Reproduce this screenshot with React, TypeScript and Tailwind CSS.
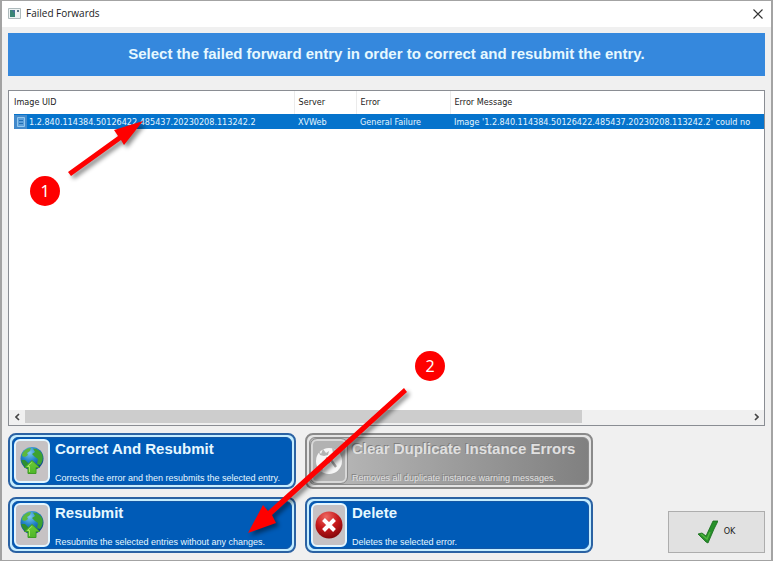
import React from "react";

const uid = "1.2.840.114384.50126422.485437.20230208.113242.2";

function GlobeIcon() {
  return (
    <svg viewBox="0 0 24 28" className="h-7 w-6" aria-hidden="true">
      <defs>
        <radialGradient id="sea" cx="0.4" cy="0.25" r="0.8">
          <stop offset="0" stopColor="#7cc8ee" />
          <stop offset="0.45" stopColor="#2383c8" />
          <stop offset="1" stopColor="#0b3c7c" />
        </radialGradient>
        <linearGradient id="leaf" x1="0" y1="0" x2="0" y2="1">
          <stop offset="0" stopColor="#6ccb35" />
          <stop offset="1" stopColor="#4fb62a" />
        </linearGradient>
      </defs>
      <circle cx="12" cy="11.5" r="11.5" fill="url(#sea)" />
      <path d="M2.5 6Q6 1 11 1L10 4L7 6L8 8L5 10L2 9Z" fill="#5cb83f" />
      <path d="M13 1.5Q20 2 22.5 8Q23.5 14 20 18L17 17L18 12L15 10L12 7L15 5Z" fill="#3da232" />
      <path d="M1.2 13L5 13L8 16L7 21Q2 18 1.2 13Z" fill="#2e8f30" />
      <path d="M12 13.5L19.5 20.5H16V26.5H8V20.5H4.5Z" fill="url(#leaf)" stroke="#3f9c26" strokeWidth="1" />
      <path d="M11.8 15.5L7.5 19.5H9.5V25" fill="none" stroke="#a4e668" strokeWidth="1" />
    </svg>
  );
}

function DisabledIcon() {
  return (
    <svg viewBox="0 0 28 28" className="h-7 w-7" aria-hidden="true">
      <circle cx="14" cy="14" r="13" fill="#f6f6f6" />
      <path d="M3 3L6 7L8 2L11 6L14 4L13 8L9 9L5 8ZM17 1L24 5L23 8L18 6Z" fill="#b4b4b4" />
      <path d="M11 11L16 13L21 20M19 9L15 13L13 16" stroke="#a2a2a2" strokeWidth="2.4" fill="none" />
      <path d="M4 20L8 22L7 25L4 22Z" fill="#c0c0c0" />
    </svg>
  );
}

function DeleteIcon() {
  return (
    <svg viewBox="0 0 28 28" className="h-7 w-7" aria-hidden="true">
      <defs>
        <radialGradient id="ruby" cx="0.4" cy="0.2" r="0.85">
          <stop offset="0" stopColor="#ee6a62" />
          <stop offset="0.5" stopColor="#c81a1c" />
          <stop offset="1" stopColor="#7c0508" />
        </radialGradient>
      </defs>
      <circle cx="14" cy="14" r="13.5" fill="url(#ruby)" />
      <path d="M8.5 8.5L19.5 19.5M19.5 8.5L8.5 19.5" stroke="#fff" strokeWidth="4" />
    </svg>
  );
}

function ActionButton({ title, detail, icon, disabled = false }: {
  title: string; detail: string; icon: React.ReactNode; disabled?: boolean;
}) {
  const outer = disabled ? "border-[#8a8a8a] bg-[#e4e4e4]" : "border-[#2b62a3] bg-[#c4edff]";
  const inner = disabled
    ? "border-[#8c8c8c] bg-linear-to-r from-[#bcbcbc] to-[#808080] text-[#e0e0e0] [text-shadow:-1px_-1px_0_#808080]"
    : "border-[#1557a5] bg-[#005bb7] text-[#e6f8ff]";
  const tile = disabled ? "border-[#d8d8d8] bg-[#b2b2b2] outline outline-[#8c8c8c]" : "border-[#e4f6ff] bg-[#c6c2c4]";
  return (
    <button type="button" disabled={disabled} className={`h-14 rounded-lg border-2 p-[2px] text-left ${outer}`}>
      <span className={`flex h-full items-center gap-[5px] rounded-md border pl-px ${inner}`}>
        <span className={`flex h-11 w-9 shrink-0 items-center justify-center rounded-md border-2 ${tile}`}>{icon}</span>
        <span className="flex h-full flex-col justify-between whitespace-nowrap">
          <span className="text-[15px] leading-[22px] font-bold">{title}</span>
          <span className="text-[9px] leading-3">{detail}</span>
        </span>
      </span>
    </button>
  );
}

function Badge({ n, place }: { n: number; place: string }) {
  return (
    <span className={`absolute flex size-[30px] items-center justify-center rounded-full bg-[#fe0000] font-['Noto_Sans',sans-serif] text-[16px] text-white ${place}`}>
      {n}
    </span>
  );
}

export default function App() {
  return (
    <div className="relative flex h-screen flex-col overflow-hidden border-t border-r-2 border-b border-l-2 border-[#a3a3a3] bg-[#f0f0f0] font-['Liberation_Sans',Arial,sans-serif]">
      <header className="flex h-[26px] shrink-0 items-center gap-[5px] bg-white pr-2 pb-px pl-1.5 font-['Open_Sans',sans-serif] text-[10px] text-[#222]">
        <svg viewBox="0 0 13 11" className="h-[11px] w-[13px]" aria-hidden="true">
          <path d="M0.5 0.5H12.5V10.5H0.5Z" fill="#eef3f3" stroke="#aebabc" />
          <path d="M2 2H7V9H2Z" fill="#398575" />
          <path d="M4 2H7V6Z" fill="#496d99" />
          <path d="M9 2H11V4H9Z" fill="#5c7788" />
        </svg>
        <h1 className="flex-1">Failed Forwards</h1>
        <button type="button" aria-label="Close">
          <svg viewBox="0 0 10 10" className="size-[10px]">
            <path d="M0.5 0.5L9.5 9.5M9.5 0.5L0.5 9.5" stroke="#333" strokeWidth="1.1" />
          </svg>
        </button>
      </header>

      <main className="flex min-h-0 flex-1 flex-col px-1.5 pt-1.5 pb-[7px]">
        <p className="flex h-[43px] shrink-0 items-center justify-center bg-[#3588dd] text-[15px] font-bold text-[#e6f8ff]">
          Select the failed forward entry in order to correct and resubmit the entry.
        </p>

        <section className="mt-3.5 flex min-h-0 flex-1 flex-col border border-[#8a8d93] bg-white">
          <div className="min-h-0 flex-1 overflow-hidden pl-[5px] font-['DejaVu_Sans_Condensed','DejaVu_Sans',sans-serif] text-[9px]">
            <table className="w-full table-fixed border-collapse text-left whitespace-nowrap">
              <colgroup>
                <col className="w-[280px]" />
                <col className="w-[62px]" />
                <col className="w-[94px]" />
                <col />
              </colgroup>
              <thead>
                <tr className="h-[23px] text-[#222]">
                  <th className="border-r border-[#ebebeb] p-0 font-normal">Image UID</th>
                  <th className="border-r border-[#ebebeb] p-0 pl-1 font-normal">Server</th>
                  <th className="border-r border-[#ebebeb] p-0 pl-1 font-normal">Error</th>
                  <th className="p-0 pl-1 font-normal">Error Message</th>
                </tr>
              </thead>
              <tbody>
                <tr className="h-[15px] bg-[#0573cc] leading-[14px] text-[#e4f5ff]">
                  <td className="p-0">
                    <span className="flex items-center gap-0.5">
                      <svg viewBox="0 0 13 14" className="h-3.5 w-[13px]" aria-hidden="true">
                        <path d="M0 0H13V14H0Z" fill="#4289cb" />
                        <path d="M3.5 2.5H10.5V11.5H3.5Z" fill="#5c9fda" stroke="#93c8ee" />
                        <path d="M5 5.5H9M5 8.5H9" stroke="#206fb5" />
                      </svg>
                      {uid}
                    </span>
                  </td>
                  <td className="p-0 pl-1">XVWeb</td>
                  <td className="p-0 pl-1">General Failure</td>
                  <td className="p-0 pl-1">Image '{uid}' could no</td>
                </tr>
              </tbody>
            </table>
          </div>
          <div className="flex h-[15px] shrink-0 items-start bg-[#f0f0f0]">
            <button type="button" aria-label="Scroll left" className="flex h-[13px] w-4 items-center justify-center">
              <svg viewBox="0 0 5 8" className="h-2 w-[5px]"><path d="M4 1L1 4L4 7" fill="none" stroke="#444" strokeWidth="1.6" /></svg>
            </button>
            <div className="h-[13px] flex-1"><div className="h-full w-[77%] bg-[#cdcdcd]" /></div>
            <button type="button" aria-label="Scroll right" className="flex h-[13px] w-4 items-center justify-center">
              <svg viewBox="0 0 5 8" className="h-2 w-[5px]"><path d="M1 1L4 4L1 7" fill="none" stroke="#444" strokeWidth="1.6" /></svg>
            </button>
          </div>
        </section>

        <footer className="mt-[7px] flex shrink-0 items-end justify-between">
          <div className="grid grid-cols-[288px_288px] gap-x-[9px] gap-y-2">
            <ActionButton title="Correct And Resubmit" detail="Corrects the error and then resubmits the selected entry." icon={<GlobeIcon />} />
            <ActionButton title="Clear Duplicate Instance Errors" detail="Removes all duplicate instance warning messages." icon={<DisabledIcon />} disabled />
            <ActionButton title="Resubmit" detail="Resubmits the selected entries without any changes." icon={<GlobeIcon />} />
            <ActionButton title="Delete" detail="Deletes the selected error." icon={<DeleteIcon />} />
          </div>
          <button type="button" className="flex h-[42px] w-[97px] items-center justify-center gap-1.5 border border-[#adadad] bg-[#e1e1e1] font-['DejaVu_Sans_Condensed','DejaVu_Sans',sans-serif] text-[9px] text-[#222]">
            <svg viewBox="0 0 20 24" className="h-6 w-5" aria-hidden="true">
              <path d="M0 14L4 13L8 16L15 1L20 1L16 9L10 23L8 22Z" fill="#27902a" stroke="#176a1b" strokeWidth="0.8" />
              <path d="M3 14L9 19L12 12" fill="none" stroke="#50b63d" strokeWidth="1.5" />
            </svg>
            OK
          </button>
        </footer>
      </main>

      <div className="pointer-events-none absolute -top-px -left-0.5">
        <svg width="773" height="561" viewBox="0 0 773 561" className="max-w-none drop-shadow-[3px_3px_2px_rgba(0,0,0,0.45)]" aria-hidden="true">
          <path d="M143 121L124 145L121 140L71 176L68 172L118 136L114 130Z" fill="#fe0000" />
          <path d="M248 533L263 505L268 511L404 388L407 392L272 515L276 523Z" fill="#fe0000" />
        </svg>
        <Badge n={1} place="top-[176px] left-[30px]" />
        <Badge n={2} place="top-[351px] left-[415px]" />
      </div>
    </div>
  );
}
